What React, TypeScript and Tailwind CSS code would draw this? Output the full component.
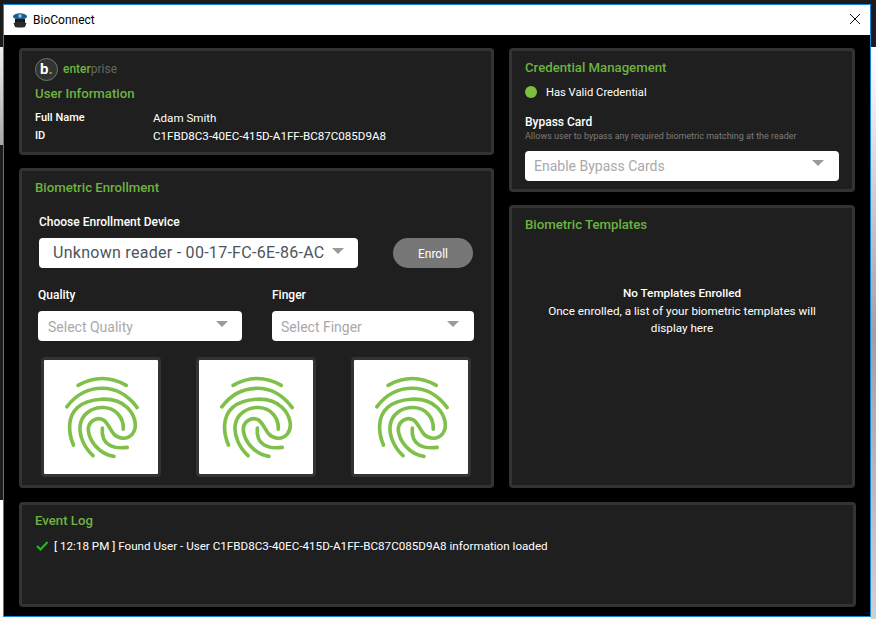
const sans = "font-['Roboto',sans-serif]";

function Caret() {
  return <span className="mb-[4px] h-0 w-0 border-x-[6px] border-t-[6px] border-x-transparent border-t-[#9a9a9a]" />;
}

function Select({ text, className, muted = true }: { text: string; className: string; muted?: boolean }) {
  return (
    <div className={`flex h-[30px] items-center justify-between rounded-[4px] bg-white ${className}`}>
      <span className={muted ? "pt-[2px] text-[14px] text-[#a9a9a9]" : "text-[16px] tracking-[0.28px] text-[#4a5560]"}>{text}</span>
      <Caret />
    </div>
  );
}

function Heading({ children }: { children: string }) {
  return <h2 className="text-[13.2px] leading-[18px] font-medium text-[#6cb33f]">{children}</h2>;
}

function Fingerprint() {
  return (
    <div className="flex h-[120px] w-[120px] items-center justify-center rounded-[4px] border-[3px] border-[#333333] bg-white">
      <svg className="ml-[2px]" width="76" height="83" viewBox="130 75 228 250" fill="none" stroke="#7fc04a" strokeWidth="11" strokeLinecap="round">
        <path d="M172 103 Q245 62 317 103" />
        <path d="M138 168 C170 125 205 112 245 112 C285 112 320 130 350 170" />
        <path d="M158 283 C140 240 142 195 170 170 C200 143 280 130 320 170 C345 195 352 230 335 250 C320 268 295 265 280 250 C268 238 262 215 248 207 C225 195 200 215 203 240 C206 270 235 310 280 317" />
        <path d="M217 315 C190 290 175 255 178 225 C182 190 215 168 250 170 C285 172 310 200 308 235" />
        <path d="M320 290 C280 295 240 285 245 232" />
      </svg>
    </div>
  );
}

export default function App() {
  return (
    <div className={`relative h-[619px] w-[876px] overflow-hidden bg-white ${sans}`}>
      <div className="absolute left-0 top-0 h-[47px] w-full bg-[#1c1c1c]" />
      <div className="absolute left-0 top-[47px] h-[98px] w-[3px] bg-gradient-to-b from-[#f0f0f0] to-[#a8a8a8]" />
      <div className="absolute left-0 top-[145px] h-[355px] w-[3px] bg-[#1c1c1c]" />
      <div className="absolute right-0 top-[47px] h-[572px] w-[5px] bg-gradient-to-b from-[#ffffff] via-[#a0a0a0] to-[#d0d0d0]" />
      <div className="relative ml-[3px] mt-[4px] flex h-[613px] w-[868px] flex-col border border-[#1787d8] bg-black">
        <header className="flex h-[30px] shrink-0 items-center justify-between bg-white pl-[8px] pr-[9px]">
          <div className="flex items-center gap-[5px]">
            <svg width="16" height="16" viewBox="0 0 16 16">
              <ellipse cx="8" cy="4.5" rx="7" ry="3.2" fill="#1c5f8f" />
              <rect x="6.5" y="2.5" width="3" height="3" fill="#9fc4dc" />
              <path d="M3 7 H13 V11 H3 Z" fill="#1a1a1a" />
              <path d="M1.5 11 C5 9.5 11 9.5 14.5 11 L13 15 C10 15.8 6 15.8 3 15 Z" fill="#2b2b2b" />
            </svg>
            <span className="text-[12px] leading-none text-black">BioConnect</span>
          </div>
          <svg className="mb-[2px]" width="12" height="12" viewBox="0 0 12 12" stroke="#111" strokeWidth="1"><path d="M1 1 L11 11 M11 1 L1 11" /></svg>
        </header>
        <main className="flex flex-1 flex-col gap-[14px] pl-[15px] pr-[14px] pt-[13px] text-white">
          <div className="flex gap-[15px]">
            <div className="flex w-[475px] flex-col gap-[13px]">
              <section className="h-[107px] rounded-[4px] border-[3px] border-[#333333] bg-[#1f1f1f] pl-[13px] pt-[6px]">
                <div className="flex h-[24px] items-center gap-[5px]">
                  <span className="flex h-[23px] w-[23px] items-center justify-center rounded-full border border-[#6a7a5c] bg-[#333] text-[15px] leading-none font-bold text-white">b<span className="text-[#6cb33f]">.</span></span>
                  <span className="text-[12px] leading-none font-medium text-[#6cb33f]">enter<span className="font-normal text-[#5f6b57]">prise</span></span>
                </div>
                <div className="mt-[4px]"><Heading>User Information</Heading></div>
                <div className="mt-[6px] grid grid-cols-[118px_1fr] text-[11px] font-medium leading-[18px]">
                  <span>Full Name</span><span className="text-[11.6px] font-normal">Adam Smith</span>
                  <span>ID</span><span className="text-[11.6px] font-normal">C1FBD8C3-40EC-415D-A1FF-BC87C085D9A8</span>
                </div>
              </section>
              <section className="h-[320px] rounded-[4px] border-[3px] border-[#333333] bg-[#1f1f1f] pl-[13px] pr-[18px] pt-[8px]">
                <Heading>Biometric Enrollment</Heading>
                <p className="ml-[4px] mt-[17px] text-[12px] font-medium leading-[16px]">Choose Enrollment Device</p>
                <div className="ml-[4px] mt-[8px] flex items-center justify-between">
                  <Select text="Unknown reader - 00-17-FC-6E-86-AC" muted={false} className="w-[319px] pl-[14px] pr-[14px]" />
                  <button className="h-[30px] w-[80px] rounded-full bg-[#777777] pt-[1px] text-[12px] text-white">Enroll</button>
                </div>
                <div className="ml-[3px] mt-[19px] grid grid-cols-[204px_202px] gap-x-[30px]">
                  <div>
                    <p className="text-[12px] font-medium leading-[16px]">Quality</p>
                    <Select text="Select Quality" className="mt-[8px] pl-[10px] pr-[14px]" />
                  </div>
                  <div>
                    <p className="text-[12px] font-medium leading-[16px]">Finger</p>
                    <Select text="Select Finger" className="mt-[8px] pl-[9px] pr-[15px]" />
                  </div>
                </div>
                <div className="ml-[6px] mt-[16px] flex gap-[35px]">
                  <Fingerprint /><Fingerprint /><Fingerprint />
                </div>
              </section>
            </div>
            <div className="flex w-[346px] flex-col gap-[13px]">
              <section className="h-[144px] rounded-[4px] border-[3px] border-[#333333] bg-[#1f1f1f] px-[13px] pt-[8px]">
                <Heading>Credential Management</Heading>
                <div className="mt-[8px] flex items-center gap-[9px] text-[11.2px] leading-[16px]">
                  <span className="mb-[2px] h-[12px] w-[12px] rounded-full bg-[#7fbf3f]" />Has Valid Credential
                </div>
                <p className="mt-[13px] text-[12px] font-medium leading-[16px]">Bypass Card</p>
                <p className="text-[9px] leading-[12px] text-[#7d7d7d]">Allows user to bypass any required biometric matching at the reader</p>
                <Select text="Enable Bypass Cards" className="mt-[9px] pb-[2px] pl-[9px] pr-[15px]" />
              </section>
              <section className="flex h-[283px] flex-col rounded-[4px] border-[3px] border-[#333333] bg-[#1f1f1f] px-[13px] pt-[8px]">
                <Heading>Biometric Templates</Heading>
                <div className="mx-auto mt-[51px] w-[290px] text-center text-[11.7px] leading-[17.5px]">
                  <p className="font-medium">No Templates Enrolled</p>
                  <p>Once enrolled, a list of your biometric templates will display here</p>
                </div>
              </section>
            </div>
          </div>
          <section className="h-[105px] rounded-[4px] border-[3px] border-[#333333] bg-[#1f1f1f] pl-[13px] pt-[7px]">
            <Heading>Event Log</Heading>
            <div className="mt-[8px] flex items-center gap-[5px] text-[11.65px] leading-[16px]">
              <svg width="14" height="12" viewBox="0 0 14 12" fill="none" stroke="#2fb52f" strokeWidth="2"><path d="M2 6 L5.5 9.5 L12.5 2" /></svg>
              [ 12:18 PM ] Found User - User C1FBD8C3-40EC-415D-A1FF-BC87C085D9A8 information loaded
            </div>
          </section>
        </main>
      </div>
    </div>
  );
}
